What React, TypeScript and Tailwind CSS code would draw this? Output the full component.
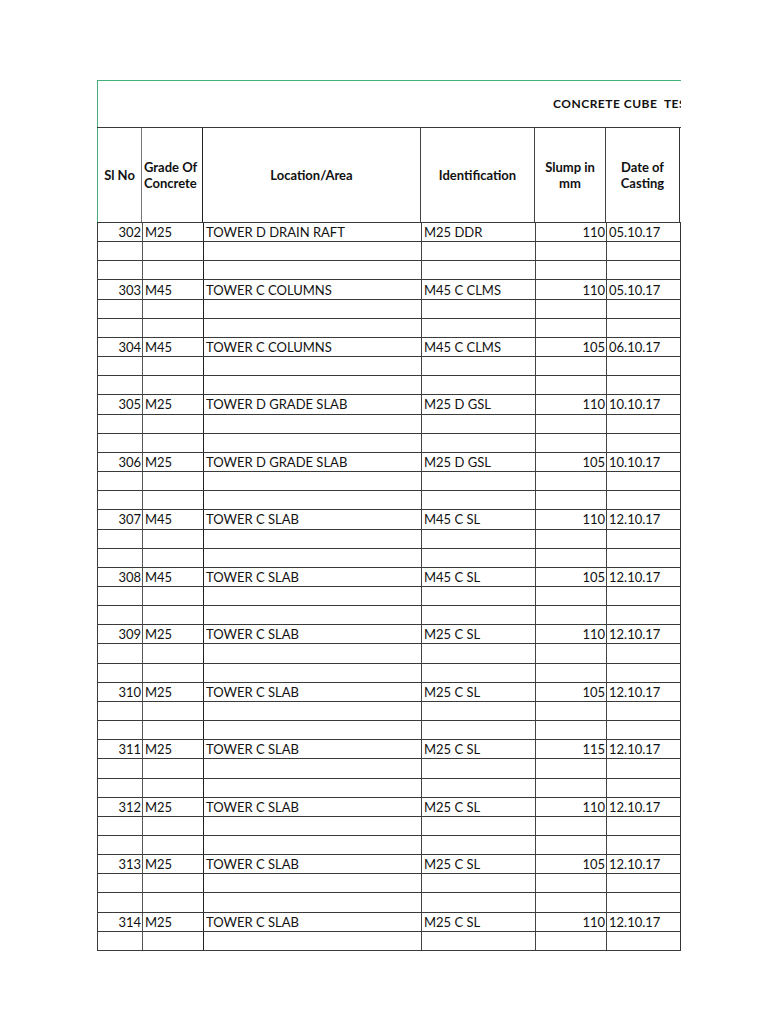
import React from 'react';

const cols = 'grid grid-cols-[45px_61px_218px_114px_71px_74px]';

const rows = [
  ['302', 'M25', 'TOWER D DRAIN RAFT', 'M25 DDR', '110', '05.10.17'],
  ['303', 'M45', 'TOWER C COLUMNS', 'M45 C CLMS', '110', '05.10.17'],
  ['304', 'M45', 'TOWER C COLUMNS', 'M45 C CLMS', '105', '06.10.17'],
  ['305', 'M25', 'TOWER D GRADE SLAB', 'M25 D GSL', '110', '10.10.17'],
  ['306', 'M25', 'TOWER D GRADE SLAB', 'M25 D GSL', '105', '10.10.17'],
  ['307', 'M45', 'TOWER C SLAB', 'M45 C SL', '110', '12.10.17'],
  ['308', 'M45', 'TOWER C SLAB', 'M45 C SL', '105', '12.10.17'],
  ['309', 'M25', 'TOWER C SLAB', 'M25 C SL', '110', '12.10.17'],
  ['310', 'M25', 'TOWER C SLAB', 'M25 C SL', '105', '12.10.17'],
  ['311', 'M25', 'TOWER C SLAB', 'M25 C SL', '115', '12.10.17'],
  ['312', 'M25', 'TOWER C SLAB', 'M25 C SL', '110', '12.10.17'],
  ['313', 'M25', 'TOWER C SLAB', 'M25 C SL', '105', '12.10.17'],
  ['314', 'M25', 'TOWER C SLAB', 'M25 C SL', '110', '12.10.17'],
];

function DataRow({ cells }: { cells?: string[] }) {
  const c = cells ?? ['', '', '', '', '', ''];
  return (
    <div className={`${cols} h-[19.158px] border-b border-[#3a3a3a] text-[13px] leading-none text-[#111]`}>
      <div className="flex items-center justify-end pt-px pr-px border-r border-[#555]">{c[0]}</div>
      <div className="flex items-center pt-px pl-[2px] border-r border-[#222]">{c[1]}</div>
      <div className="flex items-center pt-px pl-[2px] border-r border-[#444]">{c[2]}</div>
      <div className="flex items-center pt-px pl-[2px] border-r border-[#444]">{c[3]}</div>
      <div className="flex items-center justify-end pt-px pr-px border-r border-[#444]">{c[4]}</div>
      <div className="flex items-center pt-px pl-[2px] border-r border-[#333]">{c[5]}</div>
    </div>
  );
}

export default function App() {
  const body: React.ReactNode[] = [];
  rows.forEach((r, i) => {
    body.push(<DataRow key={`${i}a`} cells={r} />);
    body.push(<DataRow key={`${i}b`} />);
    if (i < rows.length - 1) body.push(<DataRow key={`${i}c`} />);
  });

  return (
    <div className="min-h-[1024px] bg-white pt-[80px] pl-[97px] font-['Lato','Open_Sans',sans-serif]">
      <div className="w-[584px] overflow-hidden">
        <div className="h-[47px] border-t border-l border-[#46b07a] flex items-center pl-[455px] text-[12px] font-bold tracking-[0.5px] text-[#111] whitespace-nowrap">
          CONCRETE CUBE&nbsp; TEST
        </div>
        <div className={`${cols} h-[96px] border-t border-b border-[#3a3a3a] text-[13px] font-bold text-[#111] leading-[16px]`}>
          <div className="flex items-center justify-center border-l border-l-[#46b07a] border-r border-[#777]">Sl No</div>
          <div className="flex items-center pl-[2px] border-r border-[#222]">Grade Of<br />Concrete</div>
          <div className="flex items-center justify-center border-r border-[#444]">Location/Area</div>
          <div className="flex items-center justify-center border-r border-[#444]">Identification</div>
          <div className="flex items-center justify-center text-center border-r border-[#444]">Slump in<br />mm</div>
          <div className="flex items-center justify-center text-center border-r border-[#333]">Date of<br />Casting</div>
        </div>
        <div className="border-l border-[#3a3a3a]">{body}</div>
      </div>
    </div>
  );
}
